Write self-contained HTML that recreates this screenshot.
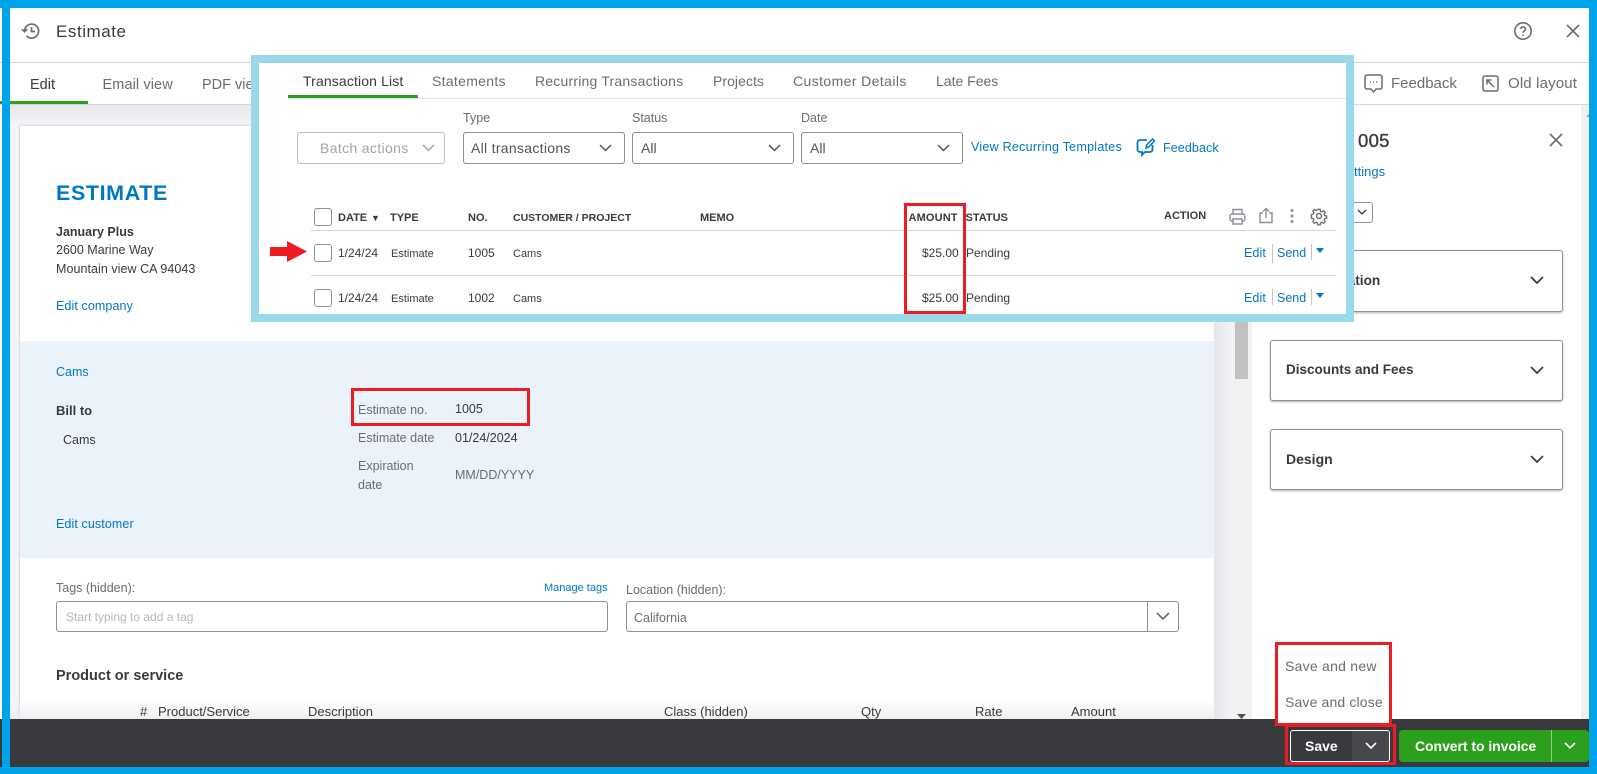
<!DOCTYPE html>
<html><head><meta charset="utf-8"><title>Estimate</title>
<style>
html,body{margin:0;padding:0;background:#fff}
#p{position:relative;width:1597px;height:774px;overflow:hidden;background:#fff;font-family:"Liberation Sans",sans-serif;color:#393a3d}
#p div,#p svg{position:absolute}
.t{position:absolute;white-space:nowrap;line-height:20px;height:20px}
.r{position:absolute;border:3px solid #ed1c24;box-sizing:border-box}
.sel{box-sizing:border-box;border:1px solid #8d9096;border-radius:3px;background:#fff}
.box{box-sizing:border-box;border:1px solid #8d9096;border-radius:3px;background:#fff;box-shadow:0 1px 2px rgba(0,0,0,.3);left:1270px;width:293px}
.b{color:#0077c5}
.g{color:#6b6c72}
.h{font-weight:bold;font-size:11px;color:#393a3d}
.c{font-size:11px;color:#393a3d}
.n{font-size:12px;color:#393a3d}
.cb{box-sizing:border-box;width:18px;height:18px;border:1px solid #8d9096;border-radius:3px;background:#fff;left:314px}
svg{overflow:visible}
</style></head><body><div id="p">

<!-- page background -->
<div style="left:10px;top:105px;width:1224px;height:615px;background:linear-gradient(#e6e8ec,#f4f5f8 22px)"></div>
<div style="left:0;top:62px;width:1589px;height:1px;background:#d4d7dc"></div>
<div style="left:0;top:104px;width:1589px;height:1px;background:#d4d7dc"></div>
<div style="left:0;top:101px;width:88px;height:3px;background:#2ca01c"></div>

<!-- header -->
<svg style="left:21px;top:21px" width="20" height="20" viewBox="0 0 20 20" fill="none" stroke="#6b6c72" stroke-width="1.7"><path d="M3.6 10a7 7 0 1 1 2 5"/><path d="M1 8.2l2.6 2.6 2.6-2.6" stroke-width="1.5"/><path d="M10.5 6v4.5h3.6"/></svg>
<span class="t" style="left:56px;top:22px;font-size:17px;color:#393a3d;letter-spacing:.55px">Estimate</span>
<span class="t" style="left:30px;top:75px;font-size:14.5px">Edit</span>
<span class="t g" style="left:102.500px;top:75px;font-size:14.5px;letter-spacing:.1px">Email view</span>
<span class="t g" style="left:202px;top:75px;font-size:14.5px">PDF view</span>

<svg style="left:1513px;top:21px" width="20" height="20" viewBox="0 0 20 20" fill="none" stroke="#6b6c72" stroke-width="1.6"><circle cx="10" cy="10" r="8.2"/><path d="M7.6 8a2.4 2.2 0 1 1 3.6 2c-.8.5-1.2.9-1.2 1.8"/><path d="M10 13.6v1.4"/></svg>
<svg style="left:1566px;top:24px" width="14" height="14" viewBox="0 0 14 14" stroke="#6b6c72" stroke-width="1.6"><path d="M1 1l12 12M13 1L1 13"/></svg>

<svg style="left:1364px;top:74px" width="19" height="19" viewBox="0 0 19 19" fill="none" stroke="#6b6c72" stroke-width="1.5"><path d="M3 1h13a2 2 0 0 1 2 2v10a2 2 0 0 1-2 2h-4l-2.500 3-2.500-3H3a2 2 0 0 1-2-2V3a2 2 0 0 1 2-2z"/><path d="M6 8h1M9 8h1M12 8h1"/></svg>
<span class="t g" style="left:1391px;top:74px;font-size:15px">Feedback</span>
<svg style="left:1482px;top:75px" width="17" height="17" viewBox="0 0 17 17" fill="none" stroke="#6b6c72" stroke-width="1.5"><rect x="1" y="1" width="15" height="15" rx="2"/><path d="M12 12L5.500 5.500M5 9.500V5h4.500"/></svg>
<span class="t g" style="left:1508px;top:74px;font-size:15px;letter-spacing:.15px">Old layout</span>

<!-- card -->
<div style="left:20px;top:126px;width:1194px;height:600px;background:#fff;box-shadow:0 0 2px rgba(80,85,95,.45)"></div>
<div style="left:10px;top:700px;width:1204px;height:19px;background:linear-gradient(rgba(240,241,243,0),rgba(233,234,237,.75))"></div>
<span class="t" style="left:56px;top:183px;font-size:21.5px;font-weight:bold;color:#0077c5;letter-spacing:.6px">ESTIMATE</span>
<span class="t" style="left:56px;top:222px;font-size:12.500px;font-weight:bold">January Plus</span>
<span class="t" style="left:56px;top:240px;font-size:12.500px">2600 Marine Way</span>
<span class="t" style="left:56px;top:259px;font-size:12.500px;letter-spacing:.05px">Mountain view CA 94043</span>
<span class="t b" style="left:56px;top:296px;font-size:12.500px;letter-spacing:.1px">Edit company</span>

<div style="left:20px;top:341px;width:1194px;height:217px;background:#eaf3fa"></div>
<span class="t b" style="left:56px;top:362px;font-size:12.500px">Cams</span>
<span class="t" style="left:56px;top:401px;font-size:13px;font-weight:bold">Bill to</span>
<span class="t" style="left:63px;top:430px;font-size:12.500px">Cams</span>
<span class="t g" style="left:358px;top:400px;font-size:12.500px">Estimate no.</span>
<span class="t" style="left:455px;top:399px;font-size:12.500px">1005</span>
<span class="t g" style="left:358px;top:428px;font-size:12.500px">Estimate date</span>
<span class="t" style="left:455px;top:428px;font-size:12.500px">01/24/2024</span>
<span class="t g" style="left:358px;top:456px;font-size:12.500px">Expiration</span>
<span class="t g" style="left:358px;top:475px;font-size:12.500px">date</span>
<span class="t g" style="left:455px;top:465px;font-size:12.500px">MM/DD/YYYY</span>
<span class="t b" style="left:56px;top:514px;font-size:12.500px;letter-spacing:.1px">Edit customer</span>
<div class="r" style="left:351px;top:388px;width:179px;height:38px"></div>

<span class="t g" style="left:56px;top:578px;font-size:12.500px">Tags (hidden):</span>
<span class="t b" style="left:544px;top:578px;font-size:11px">Manage tags</span>
<div class="sel" style="left:56px;top:601px;width:552px;height:31px"></div>
<span class="t" style="left:66px;top:607px;font-size:12px;color:#b4b7bc">Start typing to add a tag</span>
<span class="t g" style="left:626px;top:580px;font-size:12.500px">Location (hidden):</span>
<div class="sel" style="left:626px;top:601px;width:553px;height:31px"></div>
<div style="left:1147px;top:601px;width:1px;height:31px;background:#8d9096"></div>
<svg style="left:1156px;top:612px" width="14" height="9" viewBox="0 0 14 9" fill="none" stroke="#6b6c72" stroke-width="1.6"><path d="M1 1l6 6 6-6"/></svg>
<span class="t g" style="left:634px;top:608px;font-size:12.500px">California</span>
<span class="t" style="left:56px;top:666px;font-size:14.5px;font-weight:bold">Product or service</span>
<span class="t" style="left:140px;top:702px;font-size:13px">#</span>
<span class="t" style="left:158px;top:702px;font-size:13px">Product/Service</span>
<span class="t" style="left:308px;top:702px;font-size:13px">Description</span>
<span class="t" style="left:664px;top:702px;font-size:13px">Class (hidden)</span>
<span class="t" style="left:861px;top:702px;font-size:13px">Qty</span>
<span class="t" style="left:975px;top:702px;font-size:13px">Rate</span>
<span class="t" style="left:1071px;top:702px;font-size:13px">Amount</span>

<!-- middle scrollbar & side -->
<div style="left:1214px;top:105px;width:19px;height:615px;background:linear-gradient(90deg,#e4e6ea,#f3f4f7)"></div>
<div style="left:1233px;top:105px;width:19px;height:615px;background:#f1f1f1"></div>
<div style="left:1235px;top:322px;width:13px;height:57px;background:#c1c1c1"></div>
<svg style="left:1237px;top:714px" width="9" height="5" viewBox="0 0 9 5"><path d="M0 0h9L4.500 5z" fill="#505050"/></svg>
<div style="left:1581px;top:105px;width:8px;height:615px;background:#f1f1f1"></div>
<svg style="left:1586px;top:113px" width="7" height="4" viewBox="0 0 7 4"><path d="M0 4h7L3.500 0z" fill="#a3a3a3"/></svg>

<!-- right panel -->
<span class="t" style="left:1358px;top:131px;font-size:18.5px;letter-spacing:.3px;-webkit-text-stroke:.35px #393a3d">005</span>
<svg style="left:1549px;top:133px" width="14" height="14" viewBox="0 0 14 14" stroke="#6b6c72" stroke-width="1.6"><path d="M1 1l12 12M13 1L1 13"/></svg>
<span class="t b" style="left:1354px;top:162px;font-size:13px">ttings</span>
<div class="sel" style="left:1340px;top:202px;width:33px;height:21px"></div>
<svg style="left:1356px;top:209px" width="12" height="7" viewBox="0 0 12 7" fill="none" stroke="#393a3d" stroke-width="1.3"><path d="M2 1l4 4 4-4"/></svg>

<div class="box" style="top:250px;height:62px"></div>
<span class="t" style="left:1286px;top:271px;font-size:13.7px;font-weight:bold">Customization</span>
<svg style="left:1530px;top:276px" width="14" height="9" viewBox="0 0 14 9" fill="none" stroke="#393a3d" stroke-width="1.7"><path d="M1 1l6 6 6-6"/></svg>
<div class="box" style="top:340px;height:61px"></div>
<span class="t" style="left:1286px;top:360px;font-size:13.5px;font-weight:bold">Discounts and Fees</span>
<svg style="left:1530px;top:366px" width="14" height="9" viewBox="0 0 14 9" fill="none" stroke="#393a3d" stroke-width="1.7"><path d="M1 1l6 6 6-6"/></svg>
<div class="box" style="top:429px;height:61px"></div>
<span class="t" style="left:1286px;top:449px;font-size:14px;font-weight:bold">Design</span>
<svg style="left:1530px;top:455px" width="14" height="9" viewBox="0 0 14 9" fill="none" stroke="#393a3d" stroke-width="1.7"><path d="M1 1l6 6 6-6"/></svg>

<!-- bottom bar -->
<div style="left:0;top:719px;width:1589px;height:48px;background:#393a3d"></div>
<div style="left:1275px;top:642px;width:117px;height:84px;box-sizing:border-box;border:3px solid #ed1c24;background:#fff"></div>
<span class="t g" style="left:1285px;top:656px;font-size:14px;letter-spacing:.25px">Save and new</span>
<span class="t g" style="left:1285px;top:692px;font-size:14px;letter-spacing:.15px">Save and close</span>
<div class="r" style="left:1285px;top:724px;width:111px;height:41px"></div>
<div style="left:1290px;top:730px;width:100px;height:32px;box-sizing:border-box;border:1px solid #fff;border-radius:3px;background:linear-gradient(90deg,#393a3d 62%,#47484c 62%)"></div>
<span class="t" style="left:1305px;top:736px;font-size:14px;font-weight:bold;color:#fff">Save</span>
<svg style="left:1365px;top:742px" width="12" height="8" viewBox="0 0 12 8" fill="none" stroke="#fff" stroke-width="1.6"><path d="M1 1l5 5 5-5"/></svg>
<div style="left:1399px;top:730px;width:190px;height:32px;background:#2ca01c;border-radius:4px"></div>
<div style="left:1551px;top:730px;width:1px;height:32px;background:#8fd085"></div>
<span class="t" style="left:1415px;top:736px;font-size:14px;font-weight:bold;color:#fff;letter-spacing:-.05px">Convert to invoice</span>
<svg style="left:1564px;top:742px" width="12" height="8" viewBox="0 0 12 8" fill="none" stroke="#fff" stroke-width="1.6"><path d="M1 1l5 5 5-5"/></svg>

<!-- outer blue frame -->
<div style="left:0;top:0;width:1597px;height:8px;background:#00a4e8"></div>
<div style="left:2px;top:0;width:8px;height:774px;background:#00a4e8"></div>
<div style="left:1589px;top:0;width:8px;height:774px;background:#00a4e8"></div>
<div style="left:0;top:767px;width:1597px;height:7px;background:#00a4e8"></div>

<!-- overlay -->
<div style="left:251px;top:55px;width:1103px;height:267px;box-sizing:border-box;border:8px solid #99d9ea;background:#fff"></div>
<div style="left:288px;top:98px;width:1058px;height:1px;background:#e0e2e5"></div>
<div style="left:288px;top:95px;width:130px;height:3px;background:#2ca01c"></div>
<span class="t" style="left:303px;top:71px;font-size:14px;letter-spacing:.13px">Transaction List</span>
<span class="t g" style="left:432px;top:71px;font-size:14px;letter-spacing:.3px">Statements</span>
<span class="t g" style="left:535px;top:71px;font-size:14px;letter-spacing:.2px">Recurring Transactions</span>
<span class="t g" style="left:713px;top:71px;font-size:14px;letter-spacing:.05px">Projects</span>
<span class="t g" style="left:793px;top:71px;font-size:14px;letter-spacing:.4px">Customer Details</span>
<span class="t g" style="left:936px;top:71px;font-size:14px">Late Fees</span>

<span class="t g" style="left:463px;top:108px;font-size:12.500px">Type</span>
<span class="t g" style="left:632px;top:108px;font-size:12.500px">Status</span>
<span class="t g" style="left:801px;top:108px;font-size:12.500px">Date</span>

<div class="sel" style="left:297px;top:132px;width:148px;height:32px;border-color:#bcbfc3"></div>
<span class="t" style="left:320px;top:138px;font-size:14px;color:#a0a3a7;letter-spacing:.35px">Batch actions</span>
<svg style="left:422px;top:144px" width="13" height="8" viewBox="0 0 13 8" fill="none" stroke="#a0a3a7" stroke-width="1.5"><path d="M1 1l5.500 5.500L12 1"/></svg>
<div class="sel" style="left:463px;top:132px;width:162px;height:32px"></div>
<span class="t" style="left:471px;top:138px;font-size:14px;color:#50525a;letter-spacing:.3px">All transactions</span>
<svg style="left:599px;top:144px" width="13" height="8" viewBox="0 0 13 8" fill="none" stroke="#50525a" stroke-width="1.5"><path d="M1 1l5.500 5.500L12 1"/></svg>
<div class="sel" style="left:632px;top:132px;width:162px;height:32px"></div>
<span class="t" style="left:641px;top:138px;font-size:14px;color:#50525a">All</span>
<svg style="left:768px;top:144px" width="13" height="8" viewBox="0 0 13 8" fill="none" stroke="#50525a" stroke-width="1.5"><path d="M1 1l5.500 5.500L12 1"/></svg>
<div class="sel" style="left:801px;top:132px;width:162px;height:32px"></div>
<span class="t" style="left:810px;top:138px;font-size:14px;color:#50525a">All</span>
<svg style="left:937px;top:144px" width="13" height="8" viewBox="0 0 13 8" fill="none" stroke="#50525a" stroke-width="1.5"><path d="M1 1l5.500 5.500L12 1"/></svg>

<span class="t b" style="left:971px;top:137px;font-size:12.500px;letter-spacing:.26px">View Recurring Templates</span>
<svg style="left:1136px;top:137px" width="20" height="20" viewBox="0 0 20 20" fill="none" stroke="#0077c5" stroke-width="1.8"><path d="M11 3H4a2.500 2.500 0 0 0-2.500 2.500v7A2.500 2.500 0 0 0 4 15h2v3l3-3h5a2.500 2.500 0 0 0 2.500-2.500V8"/><path d="M10 11l.7-3L16.500 2l2 2-5.800 6z" stroke-width="1.500"/></svg>
<span class="t b" style="left:1163px;top:138px;font-size:12.500px;letter-spacing:.1px">Feedback</span>

<div class="cb" style="top:208px"></div>
<span class="t h" style="left:338px;top:208px">DATE</span>
<span class="t" style="left:371px;top:208px;font-size:9px;color:#393a3d">▼</span>
<span class="t h" style="left:390px;top:208px">TYPE</span>
<span class="t h" style="left:468px;top:208px">NO.</span>
<span class="t h" style="left:513px;top:208px;font-size:10.5px">CUSTOMER / PROJECT</span>
<span class="t h" style="left:700px;top:208px">MEMO</span>
<span class="t h" style="left:908.500px;top:208px;letter-spacing:.15px">AMOUNT</span>
<span class="t h" style="left:965.500px;top:208px">STATUS</span>
<span class="t h" style="left:1164px;top:206px">ACTION</span>

<svg style="left:1229px;top:208px" width="17" height="17" viewBox="0 0 17 17" fill="none" stroke="#8d9096" stroke-width="1.400"><path d="M4 6V1.500h9V6"/><rect x="1" y="6" width="15" height="7" rx="2"/><path d="M4 11h9v5H4z" fill="#fff"/></svg>
<svg style="left:1258px;top:207px" width="16" height="17" viewBox="0 0 16 17" fill="none" stroke="#8d9096" stroke-width="1.400"><path d="M5 6H2v9.500h12V6h-3"/><path d="M8 11V1.500M5 4.500l3-3 3 3"/></svg>
<svg style="left:1290px;top:208px" width="4" height="16" viewBox="0 0 4 16" fill="#8d9096"><circle cx="2" cy="2.500" r="1.500"/><circle cx="2" cy="8" r="1.500"/><circle cx="2" cy="13.500" r="1.500"/></svg>
<svg style="left:1311px;top:208px" width="16" height="16" viewBox="0 0 16 16" fill="none" stroke="#6b6c72" stroke-width="1.400"><circle cx="8" cy="8" r="2.500"/><path d="M6.800 1h2.400l.4 2 1.500.7 1.800-1.100 1.600 1.700-1.100 1.700.6 1.500 2 .5v2.300l-2 .5-.6 1.500 1.100 1.700-1.600 1.700-1.800-1.100-1.500.7-.4 2H6.800l-.4-2-1.500-.7-1.800 1.100-1.600-1.700 1.100-1.700-.6-1.500-2-.5V6.500l2-.5.6-1.500-1.100-1.700 1.600-1.700 1.800 1.100 1.500-.7z" transform="translate(.4 .4) scale(.95)"/></svg>

<div style="left:311px;top:230px;width:1025px;height:1px;background:#d4d7dc"></div>
<div style="left:311px;top:275px;width:1025px;height:1px;background:#d4d7dc"></div>

<div class="cb" style="top:244px"></div>
<span class="t n" style="left:338px;top:243px">1/24/24</span>
<span class="t c" style="left:391px;top:244px">Estimate</span>
<span class="t n" style="left:468px;top:243px">1005</span>
<span class="t c" style="left:513px;top:244px">Cams</span>
<span class="t n" style="left:922px;top:243px">$25.00</span>
<span class="t n" style="left:966px;top:243px">Pending</span>
<span class="t b" style="left:1244px;top:243px;font-size:12.500px;letter-spacing:.1px">Edit</span>
<div style="left:1272px;top:244px;width:1px;height:19px;background:#c4c6ca"></div>
<span class="t b" style="left:1277px;top:243px;font-size:12.500px">Send</span>
<div style="left:1311px;top:244px;width:1px;height:16px;background:#c4c6ca"></div>
<svg style="left:1316px;top:248px" width="8" height="5" viewBox="0 0 8 5"><path d="M0 0h8L4 5z" fill="#0077c5"/></svg>

<div class="cb" style="top:289px"></div>
<span class="t n" style="left:338px;top:288px">1/24/24</span>
<span class="t c" style="left:391px;top:289px">Estimate</span>
<span class="t n" style="left:468px;top:288px">1002</span>
<span class="t c" style="left:513px;top:289px">Cams</span>
<span class="t n" style="left:922px;top:288px">$25.00</span>
<span class="t n" style="left:966px;top:288px">Pending</span>
<span class="t b" style="left:1244px;top:288px;font-size:12.500px;letter-spacing:.1px">Edit</span>
<div style="left:1272px;top:289px;width:1px;height:16px;background:#c4c6ca"></div>
<span class="t b" style="left:1277px;top:288px;font-size:12.500px">Send</span>
<div style="left:1311px;top:289px;width:1px;height:16px;background:#c4c6ca"></div>
<svg style="left:1316px;top:293px" width="8" height="5" viewBox="0 0 8 5"><path d="M0 0h8L4 5z" fill="#0077c5"/></svg>

<div class="r" style="left:904px;top:203px;width:62px;height:111px"></div>
<svg style="left:270px;top:241px" width="37" height="21" viewBox="0 0 37 21"><path d="M0 6h17V0l20 10.500L17 21v-6H0z" fill="#ed1c24"/></svg>

</div></body></html>
